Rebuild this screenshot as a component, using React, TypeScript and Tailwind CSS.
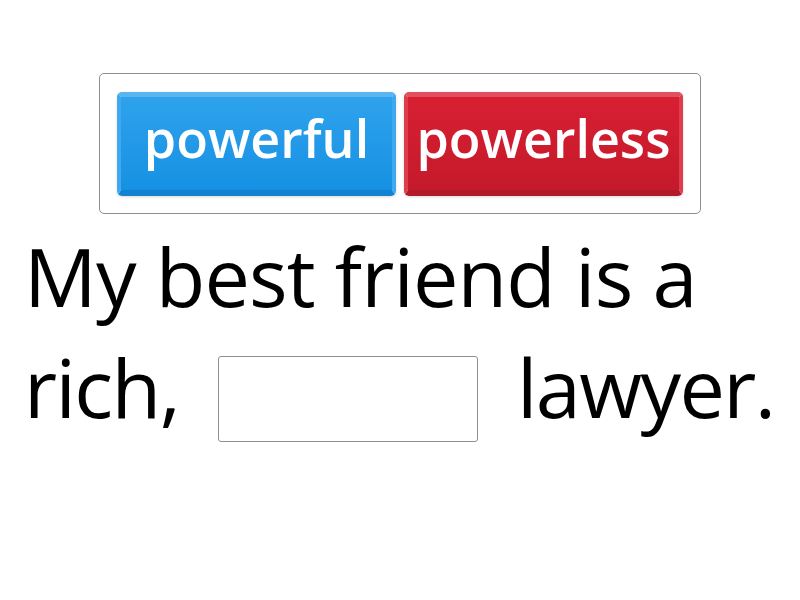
export default function App() {
  return (
    <div className="relative h-[600px] w-[800px] overflow-hidden bg-white font-['Open_Sans',sans-serif] text-black">
      <div className="flex justify-center pt-[73px]">
        <div className="flex h-[141px] w-[602px] items-center gap-[8px] rounded-[5px] border border-[#8f8f8f] px-[17px]">
          <div className="flex h-[104px] w-[280px] items-center justify-center rounded-[5px] border-x-[4px] border-t-[5px] border-b-[6px] border-x-[#40a8ec] border-t-[#5ab4ef] border-b-[#1383cf] bg-gradient-to-b from-[#2ea2ec] to-[#1591e3] pb-[10px] shadow-[0_1px_3px_rgba(0,0,0,0.15)]">
            <span className="text-[52px] leading-none font-semibold text-white">powerful</span>
          </div>
          <div className="flex h-[104px] w-[280px] items-center justify-center rounded-[5px] border-x-[4px] border-t-[5px] border-b-[6px] border-x-[#de3d4e] border-t-[#e2505f] border-b-[#b21a29] bg-gradient-to-b from-[#d81f32] to-[#c41a2b] pb-[10px] shadow-[0_1px_3px_rgba(0,0,0,0.15)]">
            <span className="text-[52px] leading-none font-semibold text-white">powerless</span>
          </div>
        </div>
      </div>
      <div className="pl-[24px] pt-[6px] text-[81px] leading-[111px] tracking-[-0.9px]">
        <div>My best friend is a</div>
        <div className="flex items-start tracking-[-1.6px]">
          <span>rich,</span>
          <span className="mt-[25px] ml-[39px] mr-[39px] h-[86px] w-[260px] rounded-[3px] border border-[#8f8f8f]" />
          <span>lawyer.</span>
        </div>
      </div>
    </div>
  );
}
